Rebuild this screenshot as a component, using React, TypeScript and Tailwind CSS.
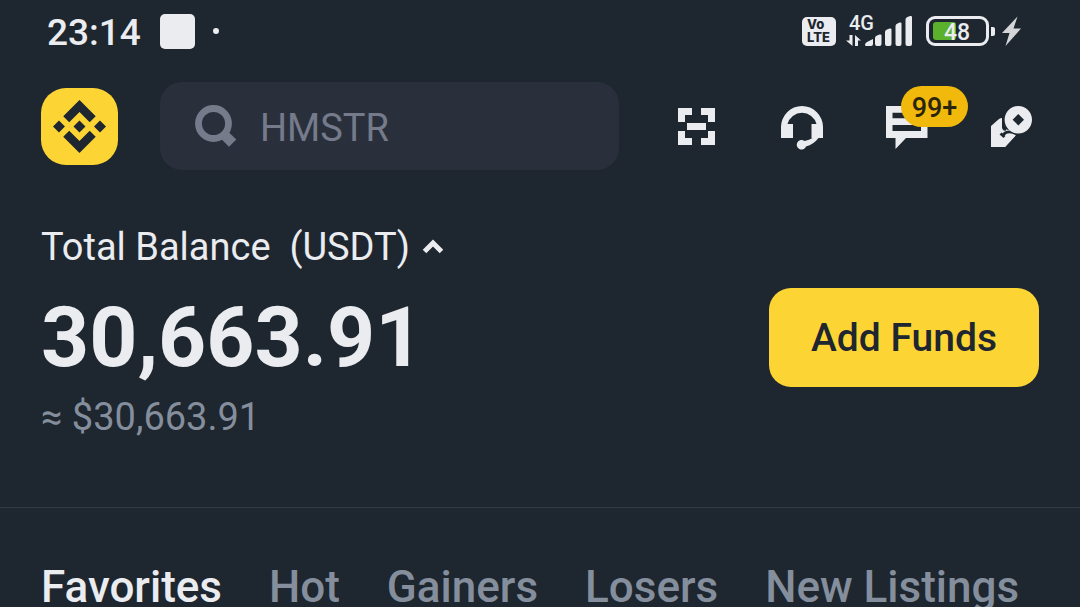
import React from "react";

const tabs = ["Favorites", "Hot", "Gainers", "Losers", "New Listings"];

function StatusBar() {
  return (
    <div className="flex h-[62px] items-center pl-[47px] pr-[59px]">
      <span className="pt-1 text-[37px] leading-10 font-medium">23:14</span>
      <span className="ml-[19px] size-[35px] rounded-[5px] bg-[#eaecef]" />
      <span className="ml-[18px] size-[6px] rounded-full bg-[#eaecef]" />
      <div className="ml-auto flex items-center">
        <span className="flex h-[29px] w-[34px] flex-col items-start justify-center rounded-[5px] bg-[#eaecef] pl-[5px] font-[Inter,sans-serif] text-[13px] leading-[13px] font-extrabold text-[#1e262f]">
          <span>Vo</span>
          <span>LTE</span>
        </span>
        <div className="relative ml-[10px] h-[34px] w-[66px]">
          <span className="absolute top-0 left-[3px] text-[20px] leading-[18px] font-medium">4G</span>
          <svg viewBox="0 0 66 34" className="h-[34px] w-[66px]" fill="#eaecef">
            <path d="M3.500 21h3v11L0 26.500h3.500zM9 32V21l6 5.500h-3V32z" />
            <path d="M19 31q0-2 2-3l6-3v5q0 2-2 2h-5q-1 0-1-1z" />
            <path d="M29 24q0-2 2-2.500l2.500-1q2-0.500 2 1V30q0 2-2 2h-2.500q-2 0-2-2z" />
            <path d="M39 18q0-2 2-2.500l2.500-1q2-0.500 2 1V30q0 2-2 2h-2.500q-2 0-2-2z" />
            <path d="M49.500 12q0-2 2-2.500l2-1q2-0.500 2 1V30q0 2-2 2h-2q-2 0-2-2z" />
            <path d="M59.500 5.500q0-2 2-2.500l2.500-1q2-0.500 2 1V30q0 2-2 2h-2.500q-2 0-2-2z" />
          </svg>
        </div>
        <div className="relative ml-[14px] h-[30px] w-[69px]">
          <svg viewBox="0 0 69 30" className="h-[30px] w-[69px]">
            <rect x="1.500" y="1.500" width="60" height="27" rx="7.500" fill="none" stroke="#eaecef" strokeWidth="3" />
            <rect x="7" y="6" width="23" height="18" rx="3" fill="#5bb02c" />
            <path d="M65 11h2q2 0 2 2v5q0 2-2 2h-2z" fill="#eaecef" />
          </svg>
          <span className="absolute inset-y-0 left-0 flex w-[62px] items-center justify-center pt-[2px] text-[23px] leading-none font-medium">48</span>
        </div>
        <svg viewBox="0 0 19 30" className="ml-[7px] h-[30px] w-[19px]" fill="#d3d5d6">
          <path d="M15.500 0.500L0 17h7.500L3.500 30 19 12.500h-7.500z" />
        </svg>
      </div>
    </div>
  );
}

function Logo() {
  return (
    <button aria-label="Binance" className="flex size-[77px] shrink-0 items-center justify-center rounded-[25px] bg-[#fcd535]">
      <svg viewBox="0 0 24 24" className="size-[53px]" fill="#1e262f">
        <path d="M16.624 13.9202l2.7175 2.7154-7.353 7.353-7.353-7.352 2.7175-2.7164 4.6355 4.6595 4.6356-4.6595zm4.6366-4.6366L24 12l-2.7154 2.7164L18.5682 12l2.6924-2.7164zm-9.272.001l2.7163 2.6914-2.7164 2.7174v-.001L9.2721 12l2.7164-2.7154zm-9.2722-.001L5.4088 12l-2.6914 2.6924L0 12l2.7164-2.7164zM11.9885.0115l7.353 7.329-2.7174 2.7154-4.6356-4.6356-4.6355 4.6595-2.7174-2.7154 7.353-7.353z" />
      </svg>
    </button>
  );
}

function Header() {
  return (
    <header className="flex items-center pt-5 pr-[47px] pl-[41px]">
      <Logo />
      <label className="ml-[42px] flex h-[88px] min-w-0 flex-1 items-center gap-[23px] rounded-[22px] bg-[#2a303b] pl-[35px]">
        <svg viewBox="0 0 42 42" className="size-[42px] shrink-0" fill="none">
          <circle cx="18.500" cy="18.500" r="15" stroke="#757b8b" strokeWidth="6.800" />
          <path d="M33 26.500l8.300 8-7.300 7.300-8-8z" fill="#757b8b" />
        </svg>
        <input
          type="search"
          aria-label="Search"
          placeholder="HMSTR"
          className="w-full min-w-0 bg-transparent pt-1 text-[38px] leading-[48px] outline-none placeholder:text-[#757b8b] placeholder:opacity-100"
        />
      </label>
      <nav className="ml-[57px] flex shrink-0 items-center gap-[63px]">
        <button aria-label="Scan">
          <svg viewBox="0 0 42 42" className="size-[42px]" fill="#eaecef">
            <path d="M2 3h14v7H9v7H2zM25 3h14v14h-7v-7h-7zM2 26h7v7h7v7H2zM32 26h7v14H25v-7h7zM11 18h19v7H11z" />
          </svg>
        </button>
        <button aria-label="Support">
          <svg viewBox="0 0 42 42" className="size-[42px] overflow-visible" fill="#eaecef">
            <path d="M0 33V22a21 21 0 0 1 42 0v11h-4.500a23 23 0 0 1-12.500 8.500a4.800 4.800 0 1 1-1.500-5.500q5-1 8-3H30.500V19h5A15 15 0 0 0 6.500 19H12v14z" />
          </svg>
        </button>
        <button aria-label="Messages, 99+ unread" className="relative">
          <svg viewBox="0 0 42 42" className="size-[42px] overflow-visible" fill="#eaecef">
            <path fillRule="evenodd" d="M0 1h41.500v32H20L9.500 44V33H0zM6.500 7.800v5.500H35V7.800zM6.500 20v6H35v-6z" />
          </svg>
          <span className="absolute -top-[19px] left-[15px] flex h-[41px] w-[67px] items-center justify-center rounded-full bg-[#f0b90b] pt-1 text-[27px] leading-none font-medium text-[#2b250c]">
            99+
          </span>
        </button>
        <button aria-label="Deposit">
          <svg viewBox="0 0 42 42" className="size-[42px] overflow-visible">
            <path d="M0 42V21L8 14q1.500-1 3-1V23q1 3 4 3 6-1 11 3L14 42z" fill="#eaecef" />
            <circle cx="27.300" cy="14.700" r="16.300" fill="#1e262f" />
            <path d="M15 24.500Q21 25 26 29L14 42 9 37V33l4-2z" fill="#eaecef" />
            <path d="M9.500 28.500L13.500 32M12.500 29.500Q17 24 27.500 30" fill="none" stroke="#1e262f" strokeWidth="2.800" />
            <path fillRule="evenodd" d="M27.300 1a13.700 13.700 0 1 1 0 27.400a13.700 13.700 0 1 1 0-27.400zm0 8l-5.700 5.700 5.700 5.700 5.700-5.700z" fill="#eaecef" />
          </svg>
        </button>
      </nav>
    </header>
  );
}

function Balance() {
  return (
    <section className="flex items-start justify-between pt-[52px] pr-[41px] pl-[41px]">
      <div>
        <button className="flex items-center text-[38px] leading-[50px] whitespace-pre">
          Total Balance  (USDT)
          <svg viewBox="0 0 22 16" className="ml-3 h-[16px] w-[22px]" fill="none">
            <path d="M2.500 12.500L11 4l8.500 8.500" stroke="#eaecef" strokeWidth="5" />
          </svg>
        </button>
        <p className="mt-4 text-[84px] leading-[100px] font-bold">30,663.91</p>
        <p className="mt-1 text-[38px] leading-[50px] text-[#848e9c]">≈ $30,663.91</p>
      </div>
      <button className="mt-[66px] h-[99px] w-[270px] shrink-0 rounded-[22px] bg-[#fcd535] pt-[2px] text-[39px] font-medium text-[#202630]">
        Add Funds
      </button>
    </section>
  );
}

export default function App() {
  return (
    <main className="h-screen overflow-hidden bg-[#1e262f] font-[Roboto,sans-serif] text-[#eaecef]">
      <StatusBar />
      <Header />
      <Balance />
      <nav className="mt-[65px] flex gap-[47px] border-t border-[#333b47] pt-[52px] pl-[41px] text-[44px] leading-[54px] font-medium whitespace-nowrap text-[#848e9c]">
        {tabs.map((tab, i) => (
          <a key={tab} href="#" className={i === 0 ? "text-[#eaecef]" : undefined}>
            {tab}
          </a>
        ))}
      </nav>
    </main>
  );
}
